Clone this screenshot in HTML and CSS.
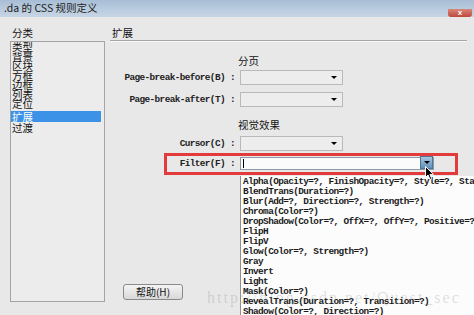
FILE: index.html
```html
<!DOCTYPE html>
<html lang="zh-CN">
<head>
    <meta charset="UTF-8">
    <meta name="viewport" content="width=device-width, initial-scale=1.0">
    <title>.da 的 CSS 规则定义</title>
    <link rel="stylesheet" href="styles.css">
</head>
<body>

<div class="dialog">
    <div class="titlebar">
        <span class="title">.da 的 CSS 规则定义</span>
        <span class="close">x</span>
    </div>

    <div class="main">
        <div class="category">
            <div class="heading">分类</div>
            <ul class="cat-list">
                <li>类型</li>
                <li>背景</li>
                <li>区块</li>
                <li>方框</li>
                <li>边框</li>
                <li>列表</li>
                <li>定位</li>
                <li class="selected">扩展</li>
                <li>过渡</li>
            </ul>
        </div>

        <div class="panel">
            <div class="panel-title">扩展</div>

            <div class="group-title">分页</div>
            <div class="row first">
                <label>Page-break-before(B) :</label>
                <div class="select"><span class="arrow"></span></div>
            </div>
            <div class="row">
                <label>Page-break-after(T) :</label>
                <div class="select"><span class="arrow"></span></div>
            </div>

            <div class="group-title visual">视觉效果</div>
            <div class="row cursor-row">
                <label>Cursor(C) :</label>
                <div class="select"><span class="arrow"></span></div>
            </div>
            <div class="row filter-row">
                <label>Filter(F) :</label>
                <div class="combo">
                    <span class="caret"></span>
                    <span class="combo-btn"><span class="arrow"></span></span>
                </div>
                <div class="highlight"></div>
                <ul class="filter-options">
                    <li>Alpha(Opacity=?, FinishOpacity=?, Style=?, StartX=?, StartY=?)</li>
                    <li>BlendTrans(Duration=?)</li>
                    <li>Blur(Add=?, Direction=?, Strength=?)</li>
                    <li>Chroma(Color=?)</li>
                    <li>DropShadow(Color=?, OffX=?, OffY=?, Positive=?)</li>
                    <li>FlipH</li>
                    <li>FlipV</li>
                    <li>Glow(Color=?, Strength=?)</li>
                    <li>Gray</li>
                    <li>Invert</li>
                    <li>Light</li>
                    <li>Mask(Color=?)</li>
                    <li>RevealTrans(Duration=?, Transition=?)</li>
                    <li>Shadow(Color=?, Direction=?)</li>
                </ul>
            </div>

            <button class="help">帮助(H)</button>
        </div>
    </div>

    <svg class="pointer" width="10" height="15" viewBox="0 0 10 15">
        <path d="M0.5 0.5 L0.5 11.5 L3 9 L5 13.5 L6.8 12.7 L4.9 8.4 L8.5 8.4 Z" fill="#000" stroke="#fff" stroke-width="1"/>
    </svg>

    <div class="watermark">http://blog.csdn.net/Quest_sec</div>
</div>

</body>
</html>
```

FILE: styles.css
```css
body {
    margin: 0;
    background-color: #e8e8e8;
    font-family: "Noto Sans CJK SC", sans-serif;
    color: #111;
}

.dialog {
    position: relative;
    width: 474px;
    height: 315px;
    overflow: hidden;
    display: flex;
    flex-direction: column;
    background-color: #e8e8e8;
}

/* barra de titulo */
.titlebar {
    flex-shrink: 0;
    height: 17px;
    display: flex;
    justify-content: space-between;
    background: linear-gradient(#a8bed6, #c7d6e5);
}

.title {
    font-size: 10.5px;
    line-height: 16px;
    padding-left: 4px;
    color: #1c1c1c;
}

.close {
    align-self: flex-end;
    width: 24px;
    height: 8px;
    margin-right: 2px;
    background: linear-gradient(#d9877c, #c0463a);
    border-radius: 0 0 3px 3px;
    color: #fff;
    font: bold 8px/7px "Liberation Sans", sans-serif;
    text-align: center;
}

.main {
    flex: 1;
    display: flex;
    padding-top: 9px;
}

/* columna de categorias */
.category {
    width: 95px;
    margin-left: 10px;
    margin-bottom: 13px;
    display: flex;
    flex-direction: column;
}

.heading {
    height: 15px;
    font-size: 10.5px;
    line-height: 14px;
    padding-left: 2px;
}

.cat-list {
    flex: 1;
    list-style: none;
    margin: 0;
    padding: 0;
    border: 1px solid #a4a4a4;
    background-color: #ececec;
}

.cat-list li {
    height: 9.5px;
    font-size: 10.5px;
    line-height: 9.5px;
    padding-left: 1px;
    margin-right: 3px;
}

.cat-list li.selected {
    height: 11px;
    line-height: 11px;
    margin-top: 2.5px;
    background-color: #3b92e6;
    color: #fff;
}

.cat-list li.selected + li {
    height: 10px;
    line-height: 11px;
}

/* panel derecho */
.panel {
    flex: 1;
    margin-left: 5px;
    margin-right: 7px;
    display: flex;
    flex-direction: column;
}

.panel-title {
    height: 14px;
    font-size: 10.5px;
    line-height: 14px;
    padding-left: 2px;
    border-bottom: 1px solid #a6a6a6;
    box-shadow: 0 1px 0 #f8f8f8;
}

.group-title {
    margin-top: 14px;
    padding-left: 128px;
    font-size: 10.5px;
    line-height: 12px;
}

.group-title.visual {
    margin-top: 12px;
}

.row {
    display: flex;
    align-items: center;
    margin-top: 7px;
}

.row.first {
    margin-top: 3px;
}

.row.cursor-row {
    margin-top: 5px;
}

.row label {
    width: 125px;
    margin-right: 5px;
    text-align: right;
    font: bold 9.4px/12px "Liberation Mono", monospace;
    letter-spacing: -0.6px;
    color: #222;
}

.select {
    box-sizing: border-box;
    width: 103px;
    height: 15px;
    border: 1px solid #b9b9b9;
    background-color: #ededed;
    display: flex;
    justify-content: flex-end;
    align-items: center;
    padding-right: 5px;
}

.arrow {
    width: 0;
    height: 0;
    border-left: 3px solid transparent;
    border-right: 3px solid transparent;
    border-top: 3px solid #000;
}

/* fila del filtro */
.filter-row {
    position: relative;
    margin-top: 6px;
}

.combo {
    position: relative;
    box-sizing: border-box;
    width: 194px;
    height: 13px;
    border: 1px solid #8d99a6;
    background-color: #fbfbfb;
}

.caret {
    position: absolute;
    left: 2px;
    top: 1px;
    width: 1px;
    height: 9px;
    background-color: #000;
}

.combo-btn {
    position: absolute;
    right: 0;
    top: -2px;
    width: 13px;
    height: 13px;
    box-sizing: border-box;
    border: 1px solid #4e7599;
    background: linear-gradient(#a9c5df, #5f8fb9);
    display: flex;
    justify-content: center;
    align-items: center;
}

.highlight {
    position: absolute;
    left: 54px;
    right: 9px;
    top: -4px;
    bottom: -5px;
    border: 3px solid #e33a3c;
}

.filter-options {
    position: absolute;
    left: 130px;
    top: 19px;
    width: 260px;
    height: 150px;
    margin: 0;
    padding: 0 0 0 2px;
    list-style: none;
    border-left: 1px solid #8f8f8f;
    background-color: #fcfcfc;
    font: bold 9.4px/10px "Liberation Mono", monospace;
    letter-spacing: -0.6px;
    color: #1a1a1a;
    white-space: nowrap;
}

.filter-options li:first-child {
    margin-top: 1px;
}

.help {
    margin-top: auto;
    margin-left: 13px;
    margin-bottom: 15px;
    width: 60px;
    height: 16px;
    padding: 0;
    border: 1px solid #8a8a8a;
    border-radius: 3px;
    background: linear-gradient(#f4f4f4, #d8d8d8);
    font-family: "Noto Sans CJK SC", sans-serif;
    font-size: 10px;
    line-height: 14px;
    color: #111;
}

.pointer {
    position: absolute;
    left: 425px;
    top: 166px;
}

.watermark {
    position: absolute;
    left: 207px;
    top: 289px;
    font: 16px "Liberation Serif", serif;
    letter-spacing: 2px;
    color: rgba(110, 110, 110, 0.22);
    pointer-events: none;
    white-space: nowrap;
}
```
